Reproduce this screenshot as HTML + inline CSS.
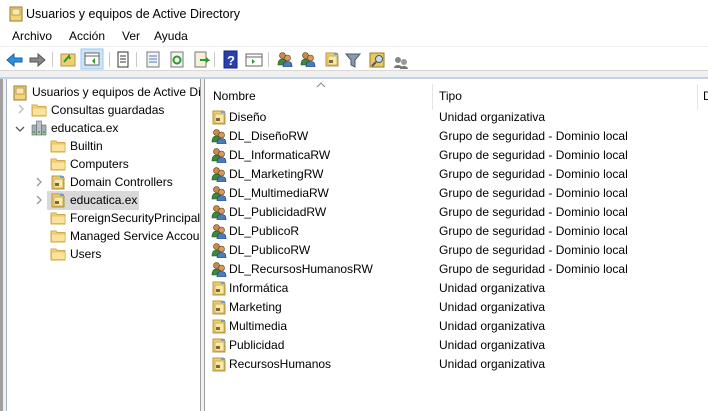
<!DOCTYPE html>
<html><head><meta charset="utf-8"><style>
*{margin:0;padding:0;box-sizing:border-box}
body{width:708px;height:411px;overflow:hidden;background:#fff;font-family:"Liberation Sans",sans-serif;font-size:12px;color:#000;position:relative}
.a{position:absolute;white-space:nowrap}
svg.i{position:absolute;width:16px;height:16px}
</style></head><body>
<svg width="0" height="0" style="position:absolute">
<defs>
<symbol id="fold" viewBox="0 0 16 16"><path d="M1 3h5l1 1.5h8v9.5H1z" fill="#f3d37a" stroke="#d3a94a"/><path d="M1.5 6h13.5v7.5H1.5z" fill="#fbe39b" stroke="#d3a94a" stroke-width=".6"/></symbol>
<symbol id="ou" viewBox="0 0 16 16"><path d="M2 2h10l2 2v11H2z" fill="#f0cf72" stroke="#b89440"/><rect x="4" y="5" width="9" height="9" fill="#fbe7a6" stroke="#b89440" stroke-width=".6"/><rect x="5" y="9" width="4" height="3" fill="#7a6a3a"/><rect x="10" y="2" width="4" height="2" fill="#6ba0d8"/></symbol>
<symbol id="grp" viewBox="0 0 16 16"><circle cx="5.5" cy="4.5" r="3" fill="#c98a4b" stroke="#5a3a1a" stroke-width=".6"/><path d="M1 14c0-5 2-6 4.5-6s4.5 1 4.5 6z" fill="#3d8a3a" stroke="#1f4d1f" stroke-width=".6"/><circle cx="10.5" cy="7" r="3" fill="#d79a5c" stroke="#5a3a1a" stroke-width=".6"/><path d="M6 16c0-5 2-5.5 4.5-5.5s4.5.5 4.5 5.5z" fill="#4a7ac0" stroke="#1f3a6a" stroke-width=".6"/></symbol>
<symbol id="dom" viewBox="0 0 16 16"><rect x="1" y="5" width="4.5" height="10" fill="#a8aeb4" stroke="#606870" stroke-width=".6"/><rect x="5.5" y="1" width="5" height="14" fill="#bcc2c8" stroke="#606870" stroke-width=".6"/><rect x="10.5" y="5" width="4.5" height="10" fill="#a8aeb4" stroke="#606870" stroke-width=".6"/><rect x="2" y="11" width="2" height="2" fill="#3fbf3f"/><rect x="7" y="11" width="2" height="2" fill="#3fbf3f"/><rect x="12" y="11" width="2" height="2" fill="#3fbf3f"/></symbol>
<symbol id="root" viewBox="0 0 16 16"><rect x="2" y="1" width="12" height="14" fill="#f3d37a" stroke="#9b7a2a"/><rect x="4" y="3" width="8" height="6" fill="#fbe9b0" stroke="#9b7a2a" stroke-width=".6"/></symbol>
</defs></svg>

<svg class="i" style="left:8px;top:6px"><use href="#root"/></svg>
<div class="a" style="left:26px;top:7px;font-size:12.5px">Usuarios y equipos de Active Directory</div>
<div class="a" style="left:12px;top:29px">Archivo</div>
<div class="a" style="left:69px;top:29px">Acción</div>
<div class="a" style="left:122px;top:29px">Ver</div>
<div class="a" style="left:154px;top:29px">Ayuda</div>
<div class="a" style="left:0;top:46px;width:708px;height:1px;background:#f0f0f0"></div>
<svg class="a" style="left:0;top:48px" width="420" height="22">
<path d="M7 12l7-6v4h8v4h-8v4z" fill="#2f8fe0" stroke="#1a5fa8"/>
<path d="M45 12l-7-6v4h-8v4h8v4z" fill="#888" stroke="#555"/>
<line x1="52.5" y1="4" x2="52.5" y2="19" stroke="#c8c8c8"/>
<rect x="61" y="6" width="14" height="12" fill="#f0cf72" stroke="#b89440"/><path d="M64 14l5-6 1 3" stroke="#2a9a2a" stroke-width="2" fill="none"/>
<rect x="81" y="1" width="22" height="20" fill="#cce4f7" stroke="#99c9ef"/>
<rect x="85" y="5" width="14" height="12" fill="#fff" stroke="#666"/><line x1="85" y1="8" x2="99" y2="8" stroke="#666"/><path d="M95 10l-3 3 3 3z" fill="#2a9a2a"/>
<line x1="109.5" y1="4" x2="109.5" y2="19" stroke="#c8c8c8"/>
<rect x="118" y="4" width="10" height="15" fill="#fff" stroke="#333"/><path d="M120 8h6M120 11h6M120 14h6" stroke="#333"/>
<line x1="136.5" y1="4" x2="136.5" y2="19" stroke="#c8c8c8"/>
<rect x="147" y="4" width="12" height="15" fill="#f4f4f4" stroke="#777"/><path d="M149 8h8M149 11h8M149 14h8" stroke="#4a7ac0"/>
<rect x="171" y="4" width="12" height="15" fill="#f4f4f4" stroke="#777"/><circle cx="177" cy="12" r="3.5" fill="none" stroke="#2a9a2a" stroke-width="2"/>
<rect x="195" y="4" width="11" height="15" fill="#f6f0d8" stroke="#777"/><path d="M200 12h8l-2-2M208 12l-2 2" stroke="#2a9a2a" stroke-width="2" fill="none"/>
<line x1="214.5" y1="4" x2="214.5" y2="19" stroke="#c8c8c8"/>
<rect x="224" y="3" width="13" height="17" fill="#2a40b0" stroke="#102080"/><text x="227" y="17" fill="#fff" font-size="13" font-family="Liberation Sans" font-weight="bold">?</text>
<rect x="246" y="6" width="16" height="12" fill="#fff" stroke="#666"/><line x1="246" y1="9" x2="262" y2="9" stroke="#666"/><path d="M252 11l3 2.5-3 2.5z" fill="#2a9a2a"/>
<line x1="268.5" y1="4" x2="268.5" y2="19" stroke="#c8c8c8"/>
</svg>
<svg class="i" style="left:277px;top:51px"><use href="#grp"/></svg>
<svg class="i" style="left:300px;top:51px"><use href="#grp"/></svg>
<svg class="i" style="left:324px;top:51px"><use href="#ou"/></svg>
<svg class="a" style="left:344px;top:50px" width="80" height="20"><path d="M2 4h14l-5 6v7l-4-2v-5z" fill="#8a9aaa" stroke="#4a5a6a"/><rect x="26" y="3" width="14" height="14" fill="#e8c860" stroke="#9b7a2a"/><circle cx="35" cy="9" r="3.5" fill="#bfe0f8" stroke="#555"/><path d="M32 12l-4 4" stroke="#555" stroke-width="2"/><circle cx="54" cy="10" r="3" fill="#888"/><circle cx="60" cy="12" r="3" fill="#999"/><path d="M50 18c0-4 8-4 8 0M56 19c0-4 8-4 8 0" fill="#777"/></svg>
<div class="a" style="left:0;top:70px;width:708px;height:1px;background:#d8d8d8"></div>
<div class="a" style="left:0;top:71px;width:708px;height:6px;background:#f0f0f0"></div>
<div class="a" style="left:0;top:77px;width:708px;height:2px;background:#c3d3e4"></div>
<div class="a" style="left:0;top:79px;width:3px;height:332px;background:#a0a0a0"></div>
<div class="a" style="left:3px;top:79px;width:3px;height:332px;background:#f0f0f0"></div>
<div class="a" style="left:6px;top:79px;width:1px;height:332px;background:#a8b4c2"></div>
<div class="a" style="left:200px;top:79px;width:1px;height:332px;background:#a0a0a0"></div>
<div class="a" style="left:201px;top:79px;width:3px;height:332px;background:#f0f0f0"></div>
<div class="a" style="left:204px;top:79px;width:1px;height:332px;background:#a0a0a0"></div>
<div style="position:absolute;left:7px;top:80px;width:193px;height:331px;overflow:hidden">
<svg class="i" style="left:5px;top:5px"><use href="#root"/></svg>
<div class="a" style="left:25px;top:5px">Usuarios y equipos de Active Directory</div>
<svg class="a" style="left:10px;top:24px" width="8" height="10"><path d="M2 1l4 4-4 4" stroke="#bbb" fill="none" stroke-width="1.3"/></svg>
<svg class="i" style="left:24px;top:22px"><use href="#fold"/></svg>
<div class="a" style="left:44px;top:23px">Consultas guardadas</div>
<svg class="a" style="left:8px;top:45px" width="10" height="8"><path d="M1 2l4 4 4-4" stroke="#555" fill="none" stroke-width="1.3"/></svg>
<svg class="i" style="left:24px;top:40px"><use href="#dom"/></svg>
<div class="a" style="left:44px;top:41px">educatica.ex</div>
<svg class="i" style="left:43px;top:58px"><use href="#fold"/></svg><div class="a" style="left:63px;top:59px">Builtin</div>
<svg class="i" style="left:43px;top:76px"><use href="#fold"/></svg><div class="a" style="left:63px;top:77px">Computers</div>
<svg class="a" style="left:28px;top:97px" width="8" height="10"><path d="M2 1l4 4-4 4" stroke="#999" fill="none" stroke-width="1.3"/></svg>
<svg class="i" style="left:43px;top:94px"><use href="#ou"/></svg><div class="a" style="left:63px;top:95px">Domain Controllers</div>
<div class="a" style="left:40px;top:111px;width:92px;height:19px;background:#d9d9d9"></div>
<svg class="a" style="left:28px;top:115px" width="8" height="10"><path d="M2 1l4 4-4 4" stroke="#999" fill="none" stroke-width="1.3"/></svg>
<svg class="i" style="left:43px;top:112px"><use href="#ou"/></svg><div class="a" style="left:63px;top:113px">educatica.ex</div>
<svg class="i" style="left:43px;top:130px"><use href="#fold"/></svg><div class="a" style="left:63px;top:131px">ForeignSecurityPrincipals</div>
<svg class="i" style="left:43px;top:148px"><use href="#fold"/></svg><div class="a" style="left:63px;top:149px">Managed Service Accounts</div>
<svg class="i" style="left:43px;top:166px"><use href="#fold"/></svg><div class="a" style="left:63px;top:167px">Users</div>
</div>
<div style="position:absolute;left:205px;top:79px;width:503px;height:332px;overflow:hidden">
<svg class="a" style="left:111px;top:3px" width="10" height="6"><path d="M1 5l4-4 4 4" stroke="#888" fill="none"/></svg>
<div class="a" style="left:8px;top:10px">Nombre</div>
<div class="a" style="left:227px;top:5px;width:1px;height:26px;background:#e5e5e5"></div>
<div class="a" style="left:234px;top:10px">Tipo</div>
<div class="a" style="left:492px;top:5px;width:1px;height:26px;background:#e5e5e5"></div>
<div class="a" style="left:498px;top:10px">D</div>
</div>
<div style="position:absolute;left:211px;top:109px">
<svg class="i" style="left:0;top:0"><use href="#ou"/></svg><div class="a" style="left:18px;top:1px">Diseño</div><div class="a" style="left:228px;top:1px">Unidad organizativa</div>
<svg class="i" style="left:0;top:19px"><use href="#grp"/></svg><div class="a" style="left:18px;top:20px">DL_DiseñoRW</div><div class="a" style="left:228px;top:20px">Grupo de seguridad - Dominio local</div>
<svg class="i" style="left:0;top:38px"><use href="#grp"/></svg><div class="a" style="left:18px;top:39px">DL_InformaticaRW</div><div class="a" style="left:228px;top:39px">Grupo de seguridad - Dominio local</div>
<svg class="i" style="left:0;top:57px"><use href="#grp"/></svg><div class="a" style="left:18px;top:58px">DL_MarketingRW</div><div class="a" style="left:228px;top:58px">Grupo de seguridad - Dominio local</div>
<svg class="i" style="left:0;top:76px"><use href="#grp"/></svg><div class="a" style="left:18px;top:77px">DL_MultimediaRW</div><div class="a" style="left:228px;top:77px">Grupo de seguridad - Dominio local</div>
<svg class="i" style="left:0;top:95px"><use href="#grp"/></svg><div class="a" style="left:18px;top:96px">DL_PublicidadRW</div><div class="a" style="left:228px;top:96px">Grupo de seguridad - Dominio local</div>
<svg class="i" style="left:0;top:114px"><use href="#grp"/></svg><div class="a" style="left:18px;top:115px">DL_PublicoR</div><div class="a" style="left:228px;top:115px">Grupo de seguridad - Dominio local</div>
<svg class="i" style="left:0;top:133px"><use href="#grp"/></svg><div class="a" style="left:18px;top:134px">DL_PublicoRW</div><div class="a" style="left:228px;top:134px">Grupo de seguridad - Dominio local</div>
<svg class="i" style="left:0;top:152px"><use href="#grp"/></svg><div class="a" style="left:18px;top:153px">DL_RecursosHumanosRW</div><div class="a" style="left:228px;top:153px">Grupo de seguridad - Dominio local</div>
<svg class="i" style="left:0;top:171px"><use href="#ou"/></svg><div class="a" style="left:18px;top:172px">Informática</div><div class="a" style="left:228px;top:172px">Unidad organizativa</div>
<svg class="i" style="left:0;top:190px"><use href="#ou"/></svg><div class="a" style="left:18px;top:191px">Marketing</div><div class="a" style="left:228px;top:191px">Unidad organizativa</div>
<svg class="i" style="left:0;top:209px"><use href="#ou"/></svg><div class="a" style="left:18px;top:210px">Multimedia</div><div class="a" style="left:228px;top:210px">Unidad organizativa</div>
<svg class="i" style="left:0;top:228px"><use href="#ou"/></svg><div class="a" style="left:18px;top:229px">Publicidad</div><div class="a" style="left:228px;top:229px">Unidad organizativa</div>
<svg class="i" style="left:0;top:247px"><use href="#ou"/></svg><div class="a" style="left:18px;top:248px">RecursosHumanos</div><div class="a" style="left:228px;top:248px">Unidad organizativa</div>
</div>
</body></html>
